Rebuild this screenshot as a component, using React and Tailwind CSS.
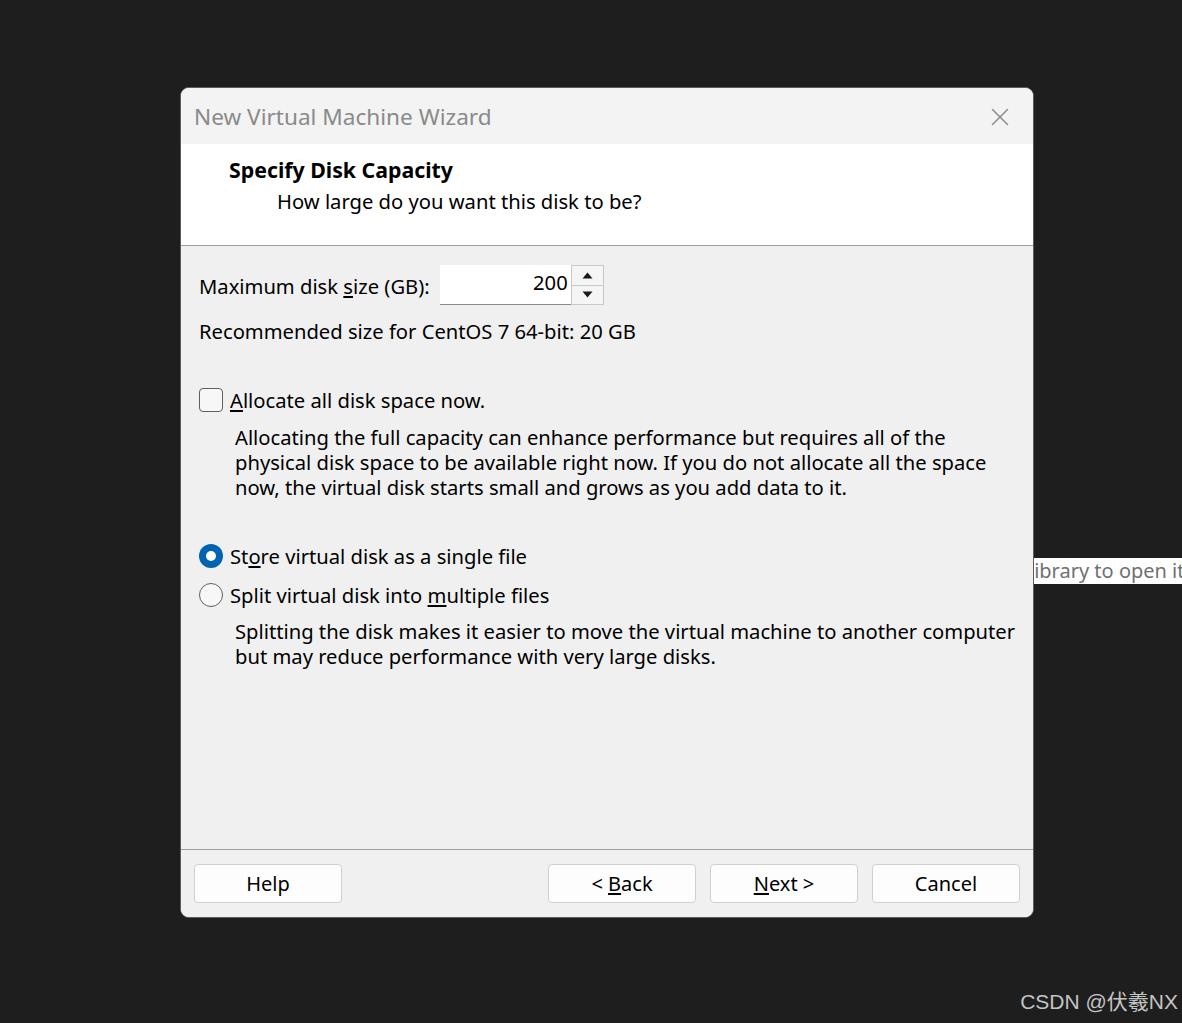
import { X } from "lucide-react";

const font = { fontFamily: '"Noto Sans", "Noto Sans CJK SC", sans-serif' };

function Btn({ children }) {
  return (
    <button className="w-[148px] h-[39px] bg-[#fdfdfd] border border-[#d0d0d0] rounded-[4px] text-[20px] text-black leading-none">
      {children}
    </button>
  );
}

export default function App() {
  return (
    <div
      className="relative min-h-[1023px] w-full bg-[#1e1e1e] overflow-hidden pt-[87px] pl-[180px]"
      style={font}
    >
      {/* strip of the window behind */}
      <div className="absolute left-[1033px] top-[558px] w-[149px] h-[26px] bg-white text-[#707070] text-[20px] leading-[26px] whitespace-nowrap overflow-hidden">
        <span className="ml-[-4px]">library to open it</span>
      </div>

      {/* dialog */}
      <div className="relative w-[854px] h-[831px] border border-[#5c5c5c] rounded-[9px] overflow-hidden flex flex-col bg-[#f0f0f0]">
        {/* title bar */}
        <div className="h-[56px] bg-[#f3f3f3] flex items-center justify-between pl-[13px] pr-[18px] shrink-0">
          <span className="text-[22.6px] text-[#8a8a8a] pt-[2px]">New Virtual Machine Wizard</span>
          <X size={30} strokeWidth={1.2} className="text-[#8c8c8c] mt-[2px]" />
        </div>

        {/* header */}
        <div className="h-[102px] bg-white border-b border-[#a0a0a0] shrink-0 pl-[48px] pt-[12px]">
          <div className="text-[21.3px] font-bold text-black leading-[28px]">Specify Disk Capacity</div>
          <div className="text-[20.2px] text-black leading-[28px] mt-[3px] pl-[48px]">
            How large do you want this disk to be?
          </div>
        </div>

        {/* body */}
        <div className="flex-1 bg-[#f0f0f0] pl-[18px] pt-[19px] text-[20.2px] text-black">
          <div className="flex items-start h-[40px]">
            <span className="leading-[40px] mt-[1px]">
              Maximum disk <u className="underline-offset-2">s</u>ize (GB):
            </span>
            <div className="ml-[10px] w-[131px] h-[40px] bg-white border-b border-[#8a8a8a] text-right pr-[3px] leading-[34px]">
              200
            </div>
            <div className="w-[33px] h-[40px] flex flex-col border border-[#c8c8c8] bg-[#f0f0f0]">
              <div className="flex-1 flex items-center justify-center border-b border-[#c8c8c8] bg-[#f5f5f5]">
                <svg width="11" height="7" viewBox="0 0 11 7">
                  <path d="M5.5 0.5 L10.5 6.5 L0.5 6.5 Z" fill="#1a1a1a" />
                </svg>
              </div>
              <div className="flex-1 flex items-center justify-center bg-[#f5f5f5]">
                <svg width="11" height="7" viewBox="0 0 11 7">
                  <path d="M0.5 0.5 L10.5 0.5 L5.5 6.5 Z" fill="#1a1a1a" />
                </svg>
              </div>
            </div>
          </div>

          <div className="mt-[11px] leading-[30px]">Recommended size for CentOS 7 64-bit: 20 GB</div>

          <div className="mt-[41px] flex items-center h-[26px]">
            <span className="w-[24px] h-[24px] border border-[#5f5f5f] rounded-[4px] bg-[#f7f7f7]" />
            <span className="ml-[7px]">
              <u className="underline-offset-2">A</u>llocate all disk space now.
            </span>
          </div>

          <div className="mt-[12px] pl-[36px] leading-[25px] whitespace-nowrap">
            Allocating the full capacity can enhance performance but requires all of the
            <br />
            physical disk space to be available right now. If you do not allocate all the space
            <br />
            now, the virtual disk starts small and grows as you add data to it.
          </div>

          <div className="mt-[42px] flex items-center h-[28px]">
            <span className="w-[24px] h-[24px] rounded-full bg-[#0063b1] flex items-center justify-center">
              <span className="w-[10px] h-[10px] rounded-full bg-white" />
            </span>
            <span className="ml-[7px]">
              St<u className="underline-offset-2">o</u>re virtual disk as a single file
            </span>
          </div>

          <div className="mt-[11px] flex items-center h-[28px]">
            <span className="w-[24px] h-[24px] rounded-full border border-[#5f5f5f] bg-[#f7f7f7]" />
            <span className="ml-[7px]">
              Split virtual disk into <u className="underline-offset-2">m</u>ultiple files
            </span>
          </div>

          <div className="mt-[10px] pl-[36px] leading-[25px] whitespace-nowrap">
            Splitting the disk makes it easier to move the virtual machine to another computer
            <br />
            but may reduce performance with very large disks.
          </div>
        </div>

        {/* footer */}
        <div className="h-[68px] shrink-0 border-t border-[#a0a0a0] bg-[#f0f0f0] flex items-start pt-[14px] pl-[13px] pr-[13px]">
          <Btn>Help</Btn>
          <div className="flex-1" />
          <div className="flex gap-[14px]">
            <Btn>
              &lt; <u className="underline-offset-2">B</u>ack
            </Btn>
            <Btn>
              <u className="underline-offset-2">N</u>ext &gt;
            </Btn>
            <Btn>Cancel</Btn>
          </div>
        </div>
      </div>

      {/* watermark */}
      <div
        className="absolute right-[4px] bottom-[11px] text-[21px] text-[#c4c4c4] leading-none"
        style={{ fontFamily: '"Liberation Sans", "Noto Sans CJK SC", sans-serif' }}
      >
        CSDN @伏羲NX
      </div>
    </div>
  );
}
